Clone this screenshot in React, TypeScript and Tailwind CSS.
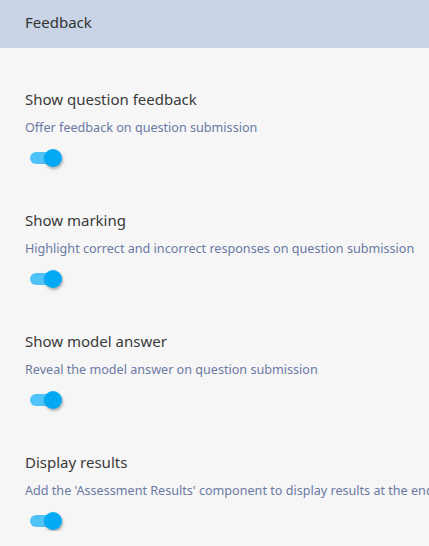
import * as React from "react";

type Setting = {
  title: string;
  description: string;
};

const settings: Setting[] = [
  { title: "Show question feedback", description: "Offer feedback on question submission" },
  { title: "Show marking", description: "Highlight correct and incorrect responses on question submission" },
  { title: "Show model answer", description: "Reveal the model answer on question submission" },
  {
    title: "Display results",
    description: "Add the 'Assessment Results' component to display results at the end",
  },
];

function Toggle({ on, onChange }: { on: boolean; onChange: () => void }) {
  return (
    <button
      type="button"
      role="switch"
      aria-checked={on}
      onClick={onChange}
      className="relative flex h-5 w-[36px] items-center"
    >
      <span className={on ? "h-3 w-[30px] rounded-full bg-[#4fc3f7]" : "h-3 w-[30px] rounded-full bg-[#bdbdbd]"} />
      <span
        className={
          on
            ? "absolute left-[14px] top-[1px] size-[18px] rounded-full bg-[#03a9f4] shadow-[1px_2px_3px_rgba(0,0,0,0.3)]"
            : "absolute left-0 top-[1px] size-[18px] rounded-full bg-[#fafafa] shadow-[1px_2px_3px_rgba(0,0,0,0.3)]"
        }
      />
    </button>
  );
}

export default function App() {
  const [values, setValues] = React.useState(settings.map(() => true));

  return (
    <div className="min-h-[546px] overflow-hidden bg-[#f6f6f6] font-['Noto_Sans',sans-serif]">
      <div className="flex h-12 items-center bg-[#c8d3e6] px-[25px] pb-1 text-[15px] text-[#333]">Feedback</div>
      <div className="flex flex-col gap-[42px] overflow-hidden px-[25px] pt-[41px]">
        {settings.map((s, i) => (
          <div key={s.title} className="flex flex-col">
            <div className="h-5 text-[15px] leading-5 text-[#3a3a3a]">{s.title}</div>
            <div className="mt-[10px] whitespace-nowrap text-[12.6px] leading-[18px] text-[#6b79a3]">
              {s.description}
            </div>
            <div className="mt-[11px] pl-[5px]">
              <Toggle
                on={values[i]}
                onChange={() => setValues(values.map((v, j) => (j === i ? !v : v)))}
              />
            </div>
          </div>
        ))}
      </div>
    </div>
  );
}
